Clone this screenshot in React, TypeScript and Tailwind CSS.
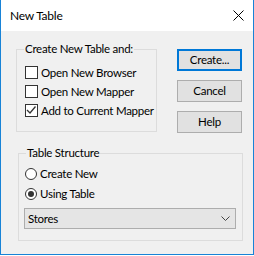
import { useState } from 'react';

function Checkbox({ label, checked }: { label: string; checked?: boolean }) {
  return (
    <div className="flex items-center h-[13px] gap-[3px]">
      <div className="w-[13px] h-[13px] border border-[#333333] bg-white flex items-center justify-center">
        {checked && (
          <svg width="11" height="11" viewBox="0 0 11 11">
            <polyline points="1,5 4,8 9.5,1.5" fill="none" stroke="#333333" strokeWidth="1.3" />
          </svg>
        )}
      </div>
      <span className="whitespace-nowrap">{label}</span>
    </div>
  );
}

function Radio({ label, checked }: { label: string; checked?: boolean }) {
  return (
    <div className="flex items-center h-[12px] gap-[3px] ml-[1px]">
      <div className="w-[12px] h-[12px] rounded-full border border-[#333333] bg-white flex items-center justify-center">
        {checked && <div className="w-[6px] h-[6px] rounded-full bg-[#333333]" />}
      </div>
      <span className="whitespace-nowrap">{label}</span>
    </div>
  );
}

export default function App() {
  const [table] = useState('Stores');

  return (
    <div className="w-[254px] h-[256px] bg-white font-[Lato] text-[11.5px] tracking-[-0.25px] leading-[16px] text-black">
      <div className="w-[254px] h-[255px] border-x border-b border-[#1883d7] flex flex-col bg-[#f0f0f0]">
        {/* title bar */}
        <div className="h-[31px] bg-white flex items-center justify-between pl-[9px] pr-[9px]">
          <span className="text-[12px]">New Table</span>
          <svg width="11" height="11" viewBox="0 0 11 11">
            <path d="M0.5 0.5 L10.5 10.5 M10.5 0.5 L0.5 10.5" stroke="#000" strokeWidth="1" />
          </svg>
        </div>

        <div className="flex-1 flex flex-col">
          <div className="flex pt-[18px]">
            <div className="ml-[15px] w-[141px] h-[83px] border border-[#dcdcdc] relative">
              <span className="absolute left-[7px] top-[-9px] px-[1px] bg-[#f0f0f0] whitespace-nowrap">
                Create New Table and:
              </span>
              <div className="flex flex-col gap-[6px] pl-[8px] pt-[16px]">
                <Checkbox label="Open New Browser" />
                <Checkbox label="Open New Mapper" />
                <Checkbox label="Add to Current Mapper" checked />
              </div>
            </div>

            <div className="ml-[20px] flex flex-col gap-[9px]">
              <button className="w-[65px] h-[22px] border-2 border-[#0078d7] bg-[#e1e1e1] flex items-center justify-center">
                Create...
              </button>
              <button className="w-[65px] h-[22px] border border-[#adadad] bg-[#e1e1e1] flex items-center justify-center">
                Cancel
              </button>
              <button className="w-[65px] h-[22px] border border-[#adadad] bg-[#e1e1e1] flex items-center justify-center">
                Help
              </button>
            </div>
          </div>

          <div className="ml-[17px] mt-[20px] w-[225px] h-[88px] border border-[#dcdcdc] relative">
            <span className="absolute left-[7px] top-[-9px] px-[1px] bg-[#f0f0f0] whitespace-nowrap">
              Table Structure
            </span>
            <div className="flex flex-col pl-[5px] pt-[14px]">
              <div className="flex flex-col gap-[8px]">
                <Radio label="Create New" />
                <Radio label="Using Table" checked />
              </div>
              <div className="mt-[8px] w-[212px] h-[21px] border border-[#adadad] bg-[#e5e5e5] flex items-center justify-between pl-[3px] pr-[5px]">
                <span>{table}</span>
                <svg width="9" height="5" viewBox="0 0 9 5">
                  <polyline points="0.5,0.5 4.5,4.5 8.5,0.5" fill="none" stroke="#444" strokeWidth="1" />
                </svg>
              </div>
            </div>
          </div>
        </div>
      </div>
    </div>
  );
}
